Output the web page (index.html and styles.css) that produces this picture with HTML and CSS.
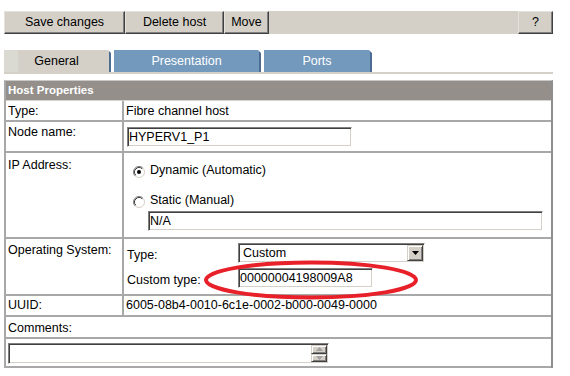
FILE: index.html
```html
<!DOCTYPE html>
<html lang="en">
<head>
<meta charset="utf-8">
<title>Host Properties</title>
<link rel="stylesheet" href="styles.css">
</head>
<body>
<div class="page">
  <div class="toolbar">
    <button class="btn btn-save">Save changes</button>
    <button class="btn btn-delete">Delete host</button>
    <button class="btn btn-move">Move</button>
    <span class="toolbar-fill"></span>
    <button class="btn btn-help">?</button>
  </div>

  <div class="tabs">
    <div class="tab tab-general">General</div>
    <div class="tab tab-blue tab-presentation">Presentation</div>
    <div class="tab tab-blue tab-ports">Ports</div>
  </div>

  <div class="props">
    <div class="props-head">Host Properties</div>

    <div class="cell label pad-3">Type:</div>
    <div class="cell value pad-3">Fibre channel host</div>

    <div class="cell label pad-3">Node name:</div>
    <div class="cell value node-value"><input class="field node-field" type="text" value="HYPERV1_P1"></div>

    <div class="cell label pad-5">IP Address:</div>
    <div class="cell value ip-value">
      <div class="radio-line">
        <svg class="radio" width="12" height="12" viewBox="0 0 12 12">
          <circle cx="6" cy="6" r="5.5" fill="#fff" stroke="#d4d0c8"/>
          <path d="M2.11 9.89A5.5 5.5 0 0 1 9.89 2.11" fill="none" stroke="#808080"/>
          <path d="M2.82 9.18A4.5 4.5 0 0 1 9.18 2.82" fill="none" stroke="#404040"/>
          <circle cx="6" cy="6" r="2" fill="#000"/>
        </svg>
        <span>Dynamic (Automatic)</span>
      </div>
      <div class="radio-line radio-line-static">
        <svg class="radio" width="12" height="12" viewBox="0 0 12 12">
          <circle cx="6" cy="6" r="5.5" fill="#fff" stroke="#d4d0c8"/>
          <path d="M2.11 9.89A5.5 5.5 0 0 1 9.89 2.11" fill="none" stroke="#808080"/>
          <path d="M2.82 9.18A4.5 4.5 0 0 1 9.18 2.82" fill="none" stroke="#404040"/>
        </svg>
        <span>Static (Manual)</span>
      </div>
      <input class="field ip-field" type="text" value="N/A">
    </div>

    <div class="cell label pad-4">Operating System:</div>
    <div class="cell value os-value">
      <div class="os-grid">
        <span class="os-label">Type:</span>
        <div class="select">
          <span class="select-text">Custom</span>
          <span class="select-btn">
            <svg width="7" height="4" viewBox="0 0 7 4"><polygon points="0,0 7,0 3.5,4" fill="#000"/></svg>
          </span>
        </div>
        <span class="os-label">Custom type:</span>
        <input class="field custom-field" type="text" value="00000004198009A8">
      </div>
    </div>

    <div class="cell label pad-2">UUID:</div>
    <div class="cell value pad-2">6005-08b4-0010-6c1e-0002-b000-0049-0000</div>

    <div class="cell full pad-4">Comments:</div>

    <div class="cell full notes-cell">
      <div class="textarea">
        <span class="scroll">
          <span class="sbtn">
            <svg width="7" height="4" viewBox="0 0 7 4"><polygon points="3.5,0 7,4 0,4" fill="#a0a0a0"/></svg>
          </span>
          <span class="sbtn">
            <svg width="7" height="4" viewBox="0 0 7 4"><polygon points="0,0 7,0 3.5,4" fill="#a0a0a0"/></svg>
          </span>
        </span>
      </div>
    </div>
  </div>

  <svg class="annotation" width="570" height="376" viewBox="0 0 570 376">
    <ellipse cx="311" cy="280" rx="105" ry="17.5" fill="none" stroke="#e8202a" stroke-width="4"/>
  </svg>
</div>
</body>
</html>
```

FILE: styles.css
```css
html, body {
  margin: 0;
  padding: 0;
  background: #fff;
}

body {
  font-family: "Liberation Sans", Arial, sans-serif;
  font-size: 12.5px;
  line-height: 15px;
  color: #000;
}

.page {
  position: relative;
  width: 570px;
  height: 376px;
  box-sizing: border-box;
  padding: 11px 0 0 4px;
  overflow: hidden;
}

/* Toolbar */
.toolbar {
  display: flex;
  width: 549px;
  height: 23px;
  background: #d4d0c8;
}

.btn {
  box-sizing: border-box;
  height: 23px;
  margin: 0;
  padding: 0;
  font: inherit;
  line-height: 21px;
  color: #000;
  background: #d4d0c8;
  border-style: solid;
  border-width: 1px;
  border-color: #e4e2dc #404040 #404040 #e4e2dc;
  box-shadow: inset -1px -1px #808080;
  text-align: center;
}

.btn-save { width: 121px; }
.btn-delete { width: 99px; }
.btn-move { width: 45px; }
.btn-help { width: 35px; }

.toolbar-fill {
  flex: 1;
}

/* Tabs */
.tabs {
  display: flex;
  gap: 3px;
  width: 549px;
  margin-top: 16px;
  border-bottom: 2px solid #d4d0c8;
}

.tab {
  position: relative;
  box-sizing: border-box;
  height: 22px;
  line-height: 22px;
  text-align: center;
  border-right: 2px solid #4d6c92;
}

.tab::after {
  content: "";
  position: absolute;
  top: 0;
  right: -2px;
  width: 0;
  height: 0;
  border-top: 3px solid #fff;
  border-left: 3px solid transparent;
}

.tab-general {
  width: 107px;
  color: #000;
  background: linear-gradient(to right, #dadad3 14px, #d4d0c8 14px);
}

.tab-blue {
  color: #fff;
  background: #7399bd;
}

.tab-presentation { width: 147px; }
.tab-ports { width: 108px; }

/* Properties panel */
.props {
  display: grid;
  grid-template-columns: 118px 1fr;
  grid-template-rows: 20px 21px 31px 86px 57px 21px 22px 29px;
  width: 549px;
  box-sizing: border-box;
  margin-top: 6px;
  border-top: 1px solid #c8c8c8;
  border-left: 2px solid #a8a8a8;
  border-right: 2px solid #8e8e8e;
}

.props-head {
  grid-column: 1 / -1;
  box-sizing: border-box;
  padding-left: 2px;
  background: #948f8b;
  border-bottom: 1px solid #d6d2ce;
  color: #fff;
  font-weight: bold;
  font-size: 11.5px;
  line-height: 19px;
}

.cell {
  box-sizing: border-box;
  border-bottom: 2px solid #a8a8a8;
  white-space: nowrap;
}

.label {
  padding-left: 2px;
  border-right: 2px solid #a8a8a8;
}

.value {
  padding-left: 2px;
}

.full {
  grid-column: 1 / -1;
  padding-left: 2px;
}

.pad-2 { padding-top: 2px; }
.pad-3 { padding-top: 3px; }
.pad-4 { padding-top: 4px; }
.pad-5 { padding-top: 5px; }

/* Form controls */
.field {
  display: block;
  box-sizing: border-box;
  height: 20px;
  margin: 0;
  padding: 0 1px;
  font: inherit;
  color: #000;
  background: #fff;
  border-style: solid;
  border-width: 1px;
  border-color: #808080 #fff #fff #808080;
  box-shadow: inset 1px 1px #404040, inset -1px -1px #d4d0c8;
  outline: none;
}

.node-value {
  padding: 5px 0 0 3px;
}

.node-field { width: 225px; }

.ip-value {
  padding: 10px 0 0 9px;
}

.radio-line {
  display: flex;
  align-items: center;
  gap: 5px;
  height: 15px;
}

.radio {
  flex: none;
  margin-top: 2px;
}

.radio-line-static {
  margin-top: 15px;
}

.ip-field {
  width: 395px;
  margin: 3px 0 0 15px;
}

.os-value {
  padding: 4px 0 0 3px;
}

.os-grid {
  display: grid;
  grid-template-columns: 111px auto;
  grid-auto-rows: 20px;
  row-gap: 5px;
  justify-content: start;
}

.os-label {
  padding-top: 5px;
}

.select {
  display: flex;
  box-sizing: border-box;
  width: 187px;
  height: 20px;
  background: #fff;
  border-style: solid;
  border-width: 1px;
  border-color: #808080 #fff #fff #808080;
  box-shadow: inset 1px 1px #404040, inset -1px -1px #d4d0c8;
  padding: 1px;
}

.select-text {
  flex: 1;
  padding-left: 3px;
  line-height: 16px;
}

.select-btn {
  display: flex;
  align-items: center;
  justify-content: center;
  box-sizing: border-box;
  width: 16px;
  height: 16px;
  background: #d4d0c8;
  border-style: solid;
  border-width: 1px;
  border-color: #d4d0c8 #404040 #404040 #d4d0c8;
  box-shadow: inset 1px 1px #fff, inset -1px -1px #808080;
}

.custom-field { width: 135px; }

.notes-cell {
  padding: 4px 0 0 2px;
}

.textarea {
  display: flex;
  justify-content: flex-end;
  box-sizing: border-box;
  width: 321px;
  height: 21px;
  padding: 1px;
  background: #fff;
  border-style: solid;
  border-width: 1px;
  border-color: #808080 #fff #fff #808080;
  box-shadow: inset 1px 1px #404040, inset -1px -1px #d4d0c8;
}

.scroll {
  display: flex;
  flex-direction: column;
  width: 16px;
}

.sbtn {
  flex: 1;
  display: flex;
  align-items: center;
  justify-content: center;
  box-sizing: border-box;
  background: #d4d0c8;
  border-style: solid;
  border-width: 1px;
  border-color: #d4d0c8 #404040 #404040 #d4d0c8;
  box-shadow: inset 1px 1px #fff, inset -1px -1px #808080;
}

.annotation {
  position: absolute;
  left: 0;
  top: 0;
  pointer-events: none;
}
```
